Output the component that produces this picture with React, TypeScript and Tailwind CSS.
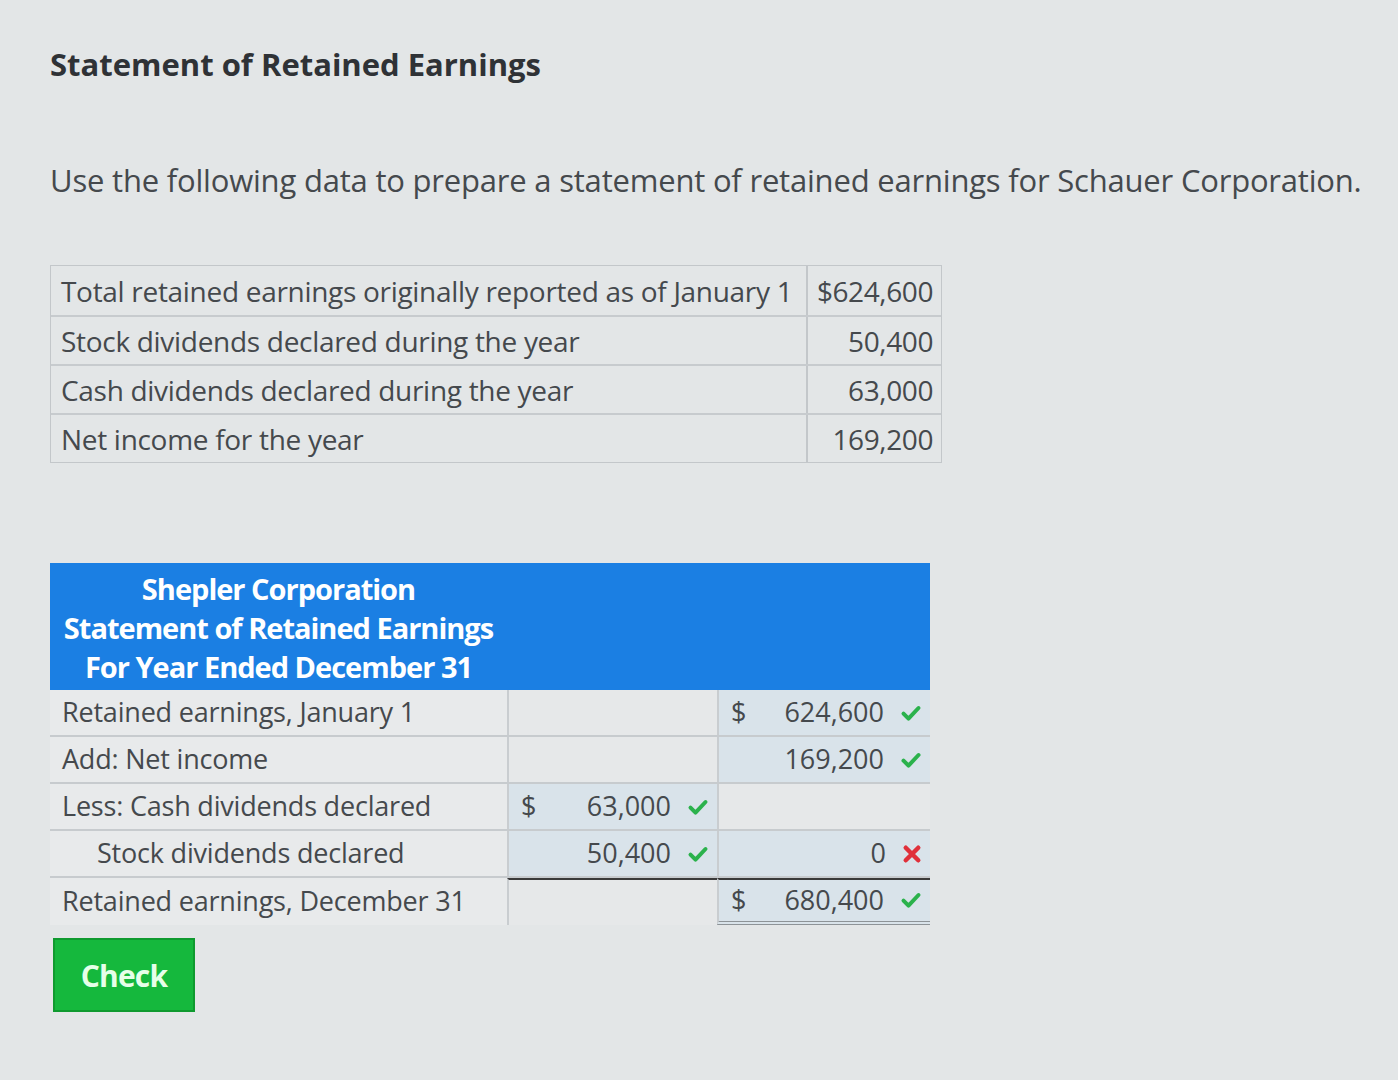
const Check = () => (
  <svg viewBox="0 0 16 16" className="ml-[16px] h-[20px] w-[22px] shrink-0">
    <path d="M2 8.5 L6 12.5 L14 4" fill="none" stroke="#2bb24c" strokeWidth="3.2" strokeLinecap="round" strokeLinejoin="round" />
  </svg>
)

const Cross = () => (
  <svg viewBox="0 0 16 16" className="ml-[16px] h-[20px] w-[20px] shrink-0">
    <path d="M3 3 L13 13 M13 3 L3 13" fill="none" stroke="#e0303a" strokeWidth="3.6" strokeLinecap="round" />
  </svg>
)

const dataRows = [
  ['Total retained earnings originally reported as of January 1', '$624,600'],
  ['Stock dividends declared during the year', '50,400'],
  ['Cash dividends declared during the year', '63,000'],
  ['Net income for the year', '169,200'],
]

type Amount = { dollar?: boolean; value: string; mark: 'ok' | 'bad' } | null

const statementRows: { label: string; indent?: boolean; mid: Amount; right: Amount; total?: boolean }[] = [
  { label: 'Retained earnings, January 1', mid: null, right: { dollar: true, value: '624,600', mark: 'ok' } },
  { label: 'Add: Net income', mid: null, right: { value: '169,200', mark: 'ok' } },
  { label: 'Less: Cash dividends declared', mid: { dollar: true, value: '63,000', mark: 'ok' }, right: null },
  { label: 'Stock dividends declared', indent: true, mid: { value: '50,400', mark: 'ok' }, right: { value: '0', mark: 'bad' } },
  { label: 'Retained earnings, December 31', mid: null, right: { dollar: true, value: '680,400', mark: 'ok' }, total: true },
]

function AmountCell({ amount, blank, topRule, doubleRule }: { amount: Amount; blank?: boolean; topRule?: boolean; doubleRule?: boolean }) {
  return (
    <div
      className={
        'flex h-full items-center border-l-2 border-[#c9cdd0] pr-[8px] pl-[12px] ' +
        (blank ? 'bg-[#e6e8e9] ' : 'bg-[#d9e3ea] ') +
        (topRule ? 'border-t-2 border-t-[#3a3a3a] ' : '') +
        (doubleRule ? 'border-b-4 border-double border-b-[#8d9397] ' : '')
      }
    >
      {amount ? (
        <>
          <span className="w-[20px]">{amount.dollar ? '$' : ''}</span>
          <span className="flex-1 text-right">{amount.value}</span>
          {amount.mark === 'ok' ? <Check /> : <Cross />}
        </>
      ) : null}
    </div>
  )
}

export default function App() {
  return (
    <div className="min-h-[1080px] w-[1398px] bg-[#e3e6e7] pt-[44px] pl-[50px] font-['Open_Sans',sans-serif] text-[#3d4145]">
      <h1 className="text-[31px] font-bold leading-[40px] text-[#2f3236]">Statement of Retained Earnings</h1>

      <p className="mt-[75px] text-[31px] leading-[42px] tracking-[-0.2px] text-[#45494d]">
        Use the following data to prepare a statement of retained earnings for Schauer Corporation.
      </p>

      <div className="mt-[64px] w-[892px] border border-[#c3c7ca] text-[28px] text-[#45494d]">
        {dataRows.map(([label, value], i) => (
          <div key={label} className={'grid h-[49px] grid-cols-[755px_1fr] ' + (i > 0 ? 'border-t-2 border-[#c7cbce]' : '')}>
            <div className="flex items-center px-[10px] tracking-[-0.3px]">{label}</div>
            <div className="flex items-center justify-end border-l-2 border-[#c3c7ca] px-[8px] tracking-[-0.4px]">{value}</div>
          </div>
        ))}
      </div>

      <div className="mt-[100px] w-[880px]">
        <div className="flex h-[127px] bg-[#1b7fe3]">
          <div className="flex w-[457px] flex-col items-center justify-center pt-[2px] text-[29px] font-bold leading-[39px] tracking-[-1px] text-white">
            <div>Shepler Corporation</div>
            <div>Statement of Retained Earnings</div>
            <div>For Year Ended December 31</div>
          </div>
        </div>
        <div className="text-[27px] text-[#45494d]">
          {statementRows.map((row, i) => (
            <div key={row.label} className="grid h-[47px] grid-cols-[457px_210px_1fr] border-b-2 border-[#c7cbce]">
              <div className={'flex items-center bg-[#e8eaeb] tracking-[-0.2px] ' + (row.indent ? 'pl-[47px]' : 'pl-[12px]')}>{row.label}</div>
              <AmountCell amount={row.mid} blank={!row.mid && i !== 3} topRule={row.total} />
              <AmountCell amount={row.right} blank={!row.right} topRule={row.total} doubleRule={row.total} />
            </div>
          ))}
        </div>
      </div>

      <button className="mt-[13px] ml-[3px] flex h-[74px] w-[142px] items-center justify-center border-2 border-[#0f9a2f] bg-[#15b83d] text-[30px] font-bold tracking-[-0.8px] text-[#e6ffe9]">
        Check
      </button>
    </div>
  )
}
